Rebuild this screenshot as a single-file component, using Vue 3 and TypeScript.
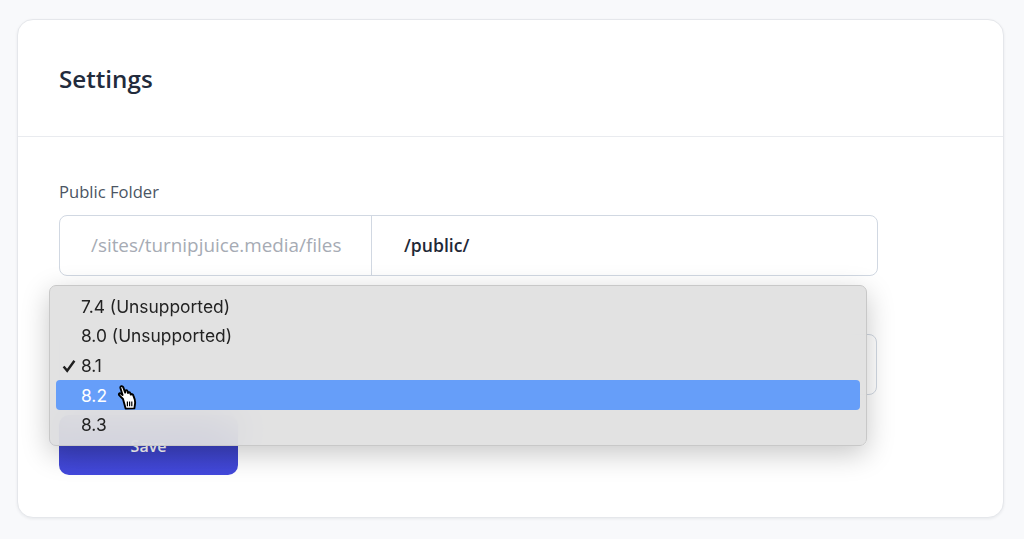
<script setup lang="ts">
interface Option { label: string; checked?: boolean; active?: boolean }
const options: Option[] = [
  { label: '7.4 (Unsupported)' },
  { label: '8.0 (Unsupported)' },
  { label: '8.1', checked: true },
  { label: '8.2', active: true },
  { label: '8.3' },
]
</script>

<template>
  <div class="page">
    <section class="card">
      <header class="card-head">
        <h1 class="title">Settings</h1>
      </header>
      <div class="card-body">
        <div class="form">
          <label class="label">Public Folder</label>
          <div class="path-input">
            <span class="prefix">/sites/turnipjuice.media/files</span>
            <span class="value">/public/</span>
          </div>
          <div class="select-box"></div>
          <button class="save" type="button">Save</button>

          <ul class="menu">
            <li
              v-for="o in options"
              :key="o.label"
              class="option"
              :class="{ active: o.active }"
            >
              <svg v-if="o.checked" class="check" viewBox="0 0 14 14" aria-hidden="true">
                <path d="M1.6 7.4 L5.2 11.8 L12.4 1.8" fill="none" stroke="#1f1f1f" stroke-width="2.4" />
              </svg>
              <span>{{ o.label }}</span>
              <svg v-if="o.active" class="hand" viewBox="0 0 20 25" aria-hidden="true">
                <path
                  d="M6 14 L2.6 10.6 C1.2 9.4 2.2 7.8 3.8 8.6 L5.6 10 L3.4 3 C3 1 5.4 .4 6.2 2.2 L8.2 7.6 L8.2 6.2 C8.4 4.6 10.2 4.8 10.6 6.4 L11 8 C11.4 6.8 13 7 13.4 8.4 L13.8 9.6 C14.4 8.8 16 9.2 16.4 10.6 C17.6 13.4 18.6 16 18 19 L17.4 23.4 L8.6 23.6 Z"
                  fill="#fff"
                  stroke="#000"
                  stroke-width="1.9"
                  stroke-linejoin="round"
                />
                <path d="M10.4 16.6v4.6M12.6 16.6v4.6M14.8 16.6v4.6" stroke="#000" stroke-width="1.2" fill="none" />
              </svg>
            </li>
          </ul>
        </div>
      </div>
    </section>
  </div>
</template>

<style>
html, body {
  margin: 0;
  background: #f8f9fb;
  overflow: hidden;
}
</style>

<style scoped>
.page {
  box-sizing: border-box;
  width: 1024px;
  height: 539px;
  padding: 19px 20px 21px 17px;
  background: #f8f9fb;
  font-family: "Open Sans", "Noto Sans", sans-serif;
}
.card {
  box-sizing: border-box;
  height: 499px;
  background: #fff;
  border: 1px solid #e5e7eb;
  border-radius: 16px;
  box-shadow: 0 1px 3px rgba(15, 23, 42, 0.07);
}
.card-head {
  height: 117px;
  box-sizing: border-box;
  padding: 2px 41px 0;
  display: flex;
  align-items: center;
  border-bottom: 1px solid #e9ebef;
}
.title {
  margin: 0;
  font-size: 24.2px;
  line-height: 32px;
  font-weight: 600;
  color: #222b3c;
}
.card-body {
  padding: 45px 125px 0 41px;
}
.form {
  position: relative;
  display: flex;
  flex-direction: column;
  align-items: flex-start;
}
.label {
  font-size: 16.6px;
  line-height: 20px;
  color: #4b5563;
  margin-bottom: 13px;
}
.path-input {
  box-sizing: border-box;
  width: 819px;
  height: 60.5px;
  display: flex;
  align-items: center;
  border: 1px solid #d1d8e2;
  border-radius: 8px;
}
.prefix {
  box-sizing: border-box;
  width: 312px;
  height: 100%;
  padding-left: 31px;
  display: flex;
  align-items: center;
  border-right: 1px solid #d1d8e2;
  color: #a6abb4;
  font-size: 18.85px;
  font-weight: 500;
  white-space: nowrap;
}
.value {
  padding-left: 32px;
  color: #1f2937;
  font-size: 17.6px;
  font-weight: 600;
}
.select-box {
  box-sizing: border-box;
  width: 818px;
  height: 60.5px;
  margin-top: 58.5px;
  border: 1px solid #d1d8e2;
  border-radius: 8px;
}
.save {
  box-sizing: border-box;
  width: 179px;
  height: 60px;
  margin-top: 20.5px;
  padding-top: 3px;
  border: 0;
  border-radius: 10px;
  background: linear-gradient(#363cae, #4349dd);
  color: #fff;
  font-family: inherit;
  font-size: 16px;
  font-weight: 600;
}
.menu {
  position: absolute;
  left: -10px;
  top: 103px;
  box-sizing: border-box;
  width: 818px;
  height: 161px;
  margin: 0;
  padding: 5.5px 6px 6px;
  list-style: none;
  background: rgba(224, 224, 224, 0.92);
  -webkit-backdrop-filter: blur(22px);
  backdrop-filter: blur(22px);
  border: 1px solid #c8c8c8;
  border-radius: 7px;
  box-shadow: 0 8px 28px rgba(0, 0, 0, 0.22);
  font-family: Inter, "Liberation Sans", sans-serif;
  font-size: 17.4px;
  color: #232323;
}
.option {
  position: relative;
  box-sizing: border-box;
  height: 29.6px;
  padding-left: 25px;
  display: flex;
  align-items: center;
  border-radius: 4px;
}
.option.active {
  background: #669ef9;
  color: #fff;
}
.check {
  position: absolute;
  left: 6px;
  top: 8px;
  width: 14px;
  height: 14px;
}
.hand {
  position: absolute;
  left: 61px;
  top: 5px;
  width: 20px;
  height: 25px;
}
</style>
